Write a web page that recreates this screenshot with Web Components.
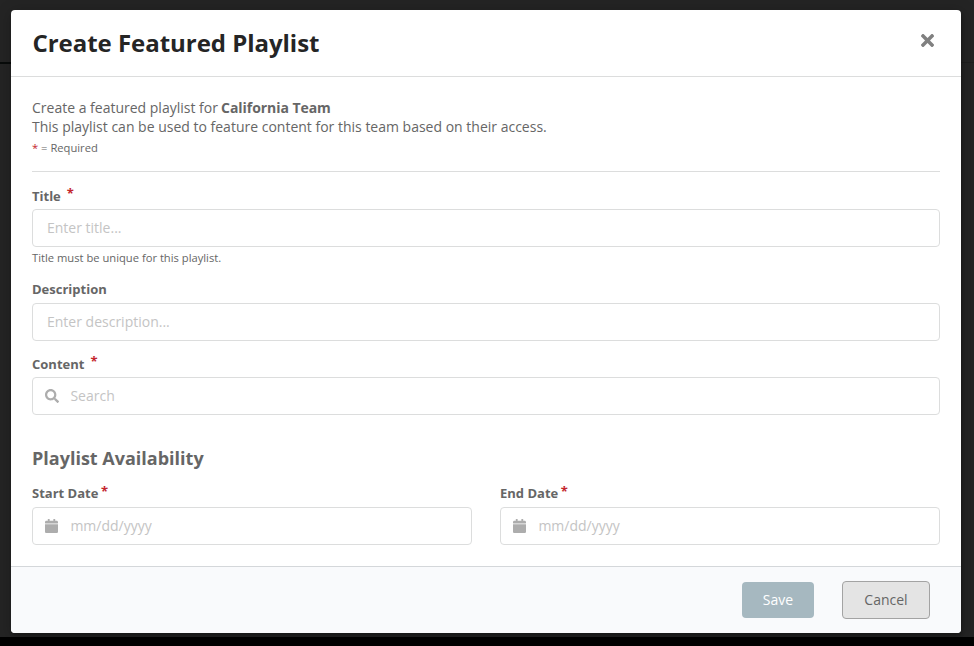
<!DOCTYPE html>
<html lang="en">
<head>
<meta charset="utf-8">
<title>Create Featured Playlist</title>
<style>
    body{
        margin: 0;
        height: 646px;
        overflow: hidden;
        background:
            linear-gradient(#080b0a, #080b0a) 0 62px / 40px 2px no-repeat,
            linear-gradient(#1e1e1e, #1e1e1e) 100% 62px / 40px 1px no-repeat,
            linear-gradient(#242424 637px, #000 637px);
        font-family: "Open Sans", "Noto Sans", sans-serif;
        font-size: 14px;
        line-height: 19px;
        color: #666;
    }
    .intro{
        padding: 21px 0 15px;
        border-bottom: 1px solid #dcdddd;
        margin-bottom: 15px;
    }
    .intro p{
        margin: 0;
    }
    .intro b{
        margin-left: -0.5px;
        letter-spacing: -0.05px;
    }
    .intro .legend{
        font-size: 11.2px;
        line-height: 16px;
        margin-top: 4px;
    }
    .legend span{
        color: #c4262e;
    }
    h3{
        margin: 30px 0 13px;
        font-size: 18px;
        line-height: 26px;
    }
    .dates{
        display: grid;
        grid-template-columns: 1fr 1fr;
        gap: 28px;
    }
</style>
</head>
<body>
    <ui-modal>
        <span slot="title">Create Featured Playlist</span>
        <div class="intro">
            <p>Create a featured playlist for <b>California Team</b></p>
            <p>This playlist can be used to feature content for this team based on their access.</p>
            <p class="legend"><span>*</span> = Required</p>
        </div>
        <ui-field label="Title" placeholder="Enter title..." required>
            <span slot="hint">Title must be unique for this playlist.</span>
        </ui-field>
        <ui-field label="Description" placeholder="Enter description..." style="margin-top: 14px"></ui-field>
        <ui-field label="Content" placeholder="Search" icon="search" required style="margin-top: 14px"></ui-field>
        <h3>Playlist Availability</h3>
        <div class="dates">
            <ui-field label="Start Date" placeholder="mm/dd/yyyy" icon="calendar" required compact></ui-field>
            <ui-field label="End Date" placeholder="mm/dd/yyyy" icon="calendar" required compact></ui-field>
        </div>
        <ui-button slot="footer" kind="primary">Save</ui-button>
        <ui-button slot="footer">Cancel</ui-button>
    </ui-modal>

<script>
    const icons = {
        search: '<svg viewBox="0 0 512 512"><path d="M505 442.700L405.300 343c-4.500-4.500-10.600-7-17-7H372c27.600-35.300 44-79.700 44-128C416 93.100 322.900 0 208 0S0 93.100 0 208s93.100 208 208 208c48.300 0 92.700-16.400 128-44v16.300c0 6.400 2.500 12.500 7 17l99.700 99.700c9.400 9.400 24.600 9.400 33.900 0l28.300-28.300c9.400-9.400 9.400-24.600.1-34zM208 336c-70.700 0-128-57.200-128-128 0-70.700 57.200-128 128-128 70.700 0 128 57.200 128 128 0 70.700-57.200 128-128 128z"/></svg>',
        calendar: '<svg viewBox="0 0 448 512" preserveAspectRatio="none" width="13"><path d="M12 192h424c6.600 0 12 5.400 12 12v260c0 26.500-21.500 48-48 48H48c-26.500 0-48-21.500-48-48V204c0-6.600 5.400-12 12-12zm436-44v-36c0-26.500-21.500-48-48-48h-48V12c0-6.600-5.400-12-12-12h-40c-6.600 0-12 5.400-12 12v52H160V12c0-6.600-5.400-12-12-12h-40c-6.600 0-12 5.400-12 12v52H48C21.500 64 0 85.500 0 112v36c0 6.600 5.400 12 12 12h424c6.600 0 12-5.400 12-12z"/></svg>',
        close: '<svg viewBox="0 0 352 512"><path d="M242.700 256l100.100-100.100c12.300-12.300 12.300-32.200 0-44.500l-22.200-22.200c-12.300-12.300-32.200-12.300-44.500 0L176 189.300 75.900 89.200c-12.300-12.300-32.200-12.300-44.500 0L9.200 111.500c-12.300 12.300-12.300 32.200 0 44.500L109.300 256 9.200 356.100c-12.300 12.300-12.300 32.200 0 44.500l22.200 22.200c12.300 12.300 32.200 12.300 44.500 0L176 322.700l100.100 100.100c12.300 12.300 32.200 12.300 44.500 0l22.200-22.200c12.300-12.300 12.300-32.200 0-44.500L242.700 256z"/></svg>'
    };

    class ui_icon extends HTMLElement{
        constructor(){
            super()
            this.attachShadow({mode: 'open'});
        }

        static get observedAttributes() {
            return ['name']
        }

        attributeChangedCallback(name, oldVal, newVal){
            this.shadowRoot.innerHTML = `
                <style>
                    :host{ display: flex; justify-content: center; }
                    svg{ height: 100%; fill: currentColor; }
                </style>
                ${icons[newVal] || ''}`;
        }
    }
    customElements.define('ui-icon', ui_icon);

    const modaltpl = document.createElement('template');
    modaltpl.innerHTML = `
        <style>
            :host{
                display: flex;
                flex-direction: column;
                box-sizing: border-box;
                width: 950px;
                height: 623px;
                margin: 10px 0 0 11px;
                border-radius: 4px;
                background: #fff;
                overflow: hidden;
                box-shadow: 1px 3px 3px rgba(0,0,0,0.2), 1px 3px 15px 2px rgba(0,0,0,0.2);
            }
            header{
                display: flex;
                justify-content: space-between;
                align-items: center;
                box-sizing: border-box;
                height: 67px;
                padding: 0 25px 0 21.4px;
                border-bottom: 1px solid #dcdddd;
            }
            h2{
                margin: 0;
                font-size: 24px;
                line-height: 30px;
                letter-spacing: -0.03px;
                color: #252525;
            }
            ui-icon{
                width: 16px;
                height: 19px;
                margin-bottom: 5px;
                color: #808080;
            }
            main{
                flex: 1;
                padding: 0 21px;
            }
            footer{
                display: flex;
                justify-content: flex-end;
                align-items: center;
                gap: 28px;
                box-sizing: border-box;
                height: 67px;
                padding-right: 31px;
                background: #f9fafc;
                border-top: 1px solid #d4d7da;
            }
        </style>
        <header>
            <h2><slot name="title"></slot></h2>
            <ui-icon name="close"></ui-icon>
        </header>
        <main><slot></slot></main>
        <footer><slot name="footer"></slot></footer>`;

    class ui_modal extends HTMLElement{
        constructor(){
            super()
            this.attachShadow({mode: 'open'});
            this.shadowRoot.appendChild(modaltpl.content.cloneNode(true));
        }
    }
    customElements.define('ui-modal', ui_modal);

    const fieldtpl = document.createElement('template');
    fieldtpl.innerHTML = `
        <style>
            :host{
                display: block;
            }
            label{
                display: flex;
                height: 18px;
                margin-bottom: 4px;
                font-size: 13px;
                font-weight: bold;
                line-height: 18px;
            }
            :host(:not([required])) label, :host([compact]) label{
                margin-bottom: 5px;
            }
            #star{
                display: none;
                margin: -3px 0 0 6px;
                color: #c4262e;
            }
            :host([required]) #star{
                display: block;
            }
            :host([compact]) #star{
                margin: -2px 0 0 2.5px;
            }
            #box{
                display: flex;
                align-items: center;
                box-sizing: border-box;
                height: 38px;
                padding: 0 14px;
                border: 1px solid #dcdddd;
                border-radius: 4px;
                background: #fff;
            }
            ui-icon{
                display: none;
                width: 14px;
                height: 14px;
                margin: 0 11.7px 0 -2.3px;
                color: #adadad;
            }
            :host([icon]) ui-icon{
                display: flex;
            }
            #placeholder{
                padding-bottom: 2px;
                color: #c4c4c4;
            }
            ::slotted([slot=hint]){
                display: block;
                padding-top: 3px;
                font-size: 11.2px;
                line-height: 16px;
            }
        </style>
        <label><span id="text"></span><span id="star">*</span></label>
        <div id="box"><ui-icon></ui-icon><span id="placeholder"></span></div>
        <slot name="hint"></slot>`;

    class ui_field extends HTMLElement{
        constructor(){
            super()
            this.attachShadow({mode: 'open'});
            this.shadowRoot.appendChild(fieldtpl.content.cloneNode(true));
            this.shadowRoot.querySelector('#text').textContent = this.getAttribute('label');
            this.shadowRoot.querySelector('#placeholder').textContent = this.getAttribute('placeholder');
            this.shadowRoot.querySelector('ui-icon').setAttribute('name', this.getAttribute('icon'));
        }
    }
    customElements.define('ui-field', ui_field);

    const buttontpl = document.createElement('template');
    buttontpl.innerHTML = `
        <style>
            :host{
                display: block;
            }
            button{
                display: block;
                box-sizing: border-box;
                width: 88px;
                height: 38px;
                padding: 0 0 2px;
                border: 1px solid #a3a3a3;
                border-radius: 4px;
                background: #e4e4e4;
                color: #666;
                font: inherit;
            }
            :host([kind=primary]) button{
                width: 72px;
                height: 36px;
                border: 0;
                background: #a6b8c0;
                color: #fff;
            }
        </style>
        <button><slot></slot></button>`;

    class ui_button extends HTMLElement{
        constructor(){
            super()
            this.attachShadow({mode: 'open'});
            this.shadowRoot.appendChild(buttontpl.content.cloneNode(true));
        }
    }
    customElements.define('ui-button', ui_button);
</script>
</body>
</html>
